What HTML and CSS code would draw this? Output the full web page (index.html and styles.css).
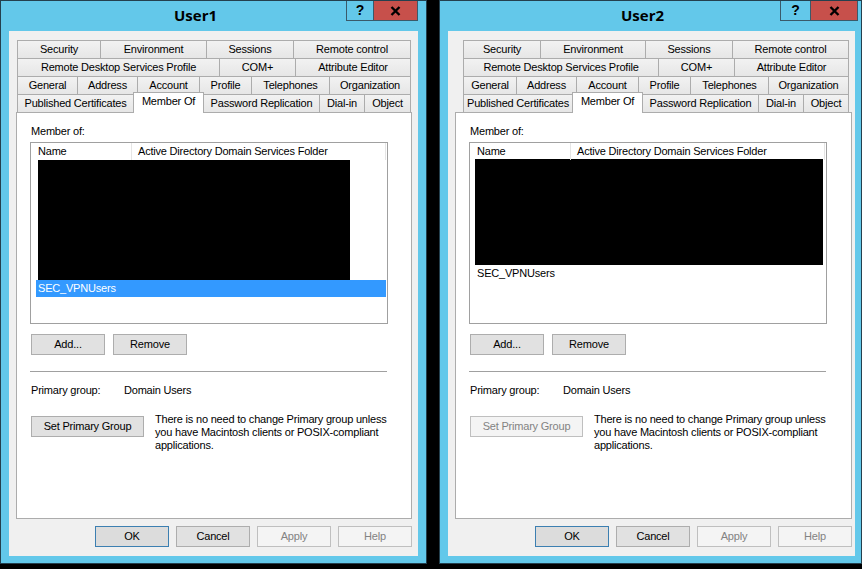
FILE: index.html
```html
<!DOCTYPE html>
<html>
<head>
    <title>User Properties</title>
    <link rel="stylesheet" href="styles.css">
</head>
<body>
<div class="desk">

    <div class="win">
        <div class="titlebar">
            <div class="title">User1</div>
            <div class="caps">
                <div class="cap cap-help">?</div>
                <div class="cap cap-close">
                    <svg width="11" height="10" viewBox="0 0 11 10"><path d="M1.5 1l8 8M9.5 1l-8 8" stroke="#000" stroke-width="2.4" fill="none"/></svg>
                </div>
            </div>
        </div>
        <div class="client">
            <div class="tabs">
                <div class="tab-row r1">
                    <div class="tab">Security</div>
                    <div class="tab">Environment</div>
                    <div class="tab">Sessions</div>
                    <div class="tab">Remote control</div>
                </div>
                <div class="tab-row r2">
                    <div class="tab">Remote Desktop Services Profile</div>
                    <div class="tab">COM+</div>
                    <div class="tab">Attribute Editor</div>
                </div>
                <div class="tab-row r3">
                    <div class="tab">General</div>
                    <div class="tab">Address</div>
                    <div class="tab">Account</div>
                    <div class="tab">Profile</div>
                    <div class="tab">Telephones</div>
                    <div class="tab">Organization</div>
                </div>
                <div class="tab-row r4">
                    <div class="tab">Published Certificates</div>
                    <div class="tab active">Member Of</div>
                    <div class="tab">Password Replication</div>
                    <div class="tab">Dial-in</div>
                    <div class="tab">Object</div>
                </div>
            </div>
            <div class="panel">
                <div class="lbl">Member of:</div>
                <div class="list">
                    <div class="list-head">
                        <div class="col col-name">Name</div>
                        <div class="col col-folder">Active Directory Domain Services Folder</div>
                    </div>
                    <div class="redact"></div>
                    <div class="item sel">SEC_VPNUsers</div>
                </div>
                <div class="btn-row">
                    <button class="btn">Add...</button>
                    <button class="btn">Remove</button>
                </div>
                <div class="sep"></div>
                <div class="pg-row"><span class="pg-label">Primary group:</span><span>Domain Users</span></div>
                <div class="set-row">
                    <button class="btn btn-wide">Set Primary Group</button>
                    <p class="note">There is no need to change Primary group unless<br>you have Macintosh clients or POSIX-compliant<br>applications.</p>
                </div>
            </div>
            <div class="footer">
                <button class="btn btn-default">OK</button>
                <button class="btn">Cancel</button>
                <button class="btn" disabled>Apply</button>
                <button class="btn" disabled>Help</button>
            </div>
        </div>
    </div>

    <div class="win win-2">
        <div class="titlebar">
            <div class="title">User2</div>
            <div class="caps">
                <div class="cap cap-help">?</div>
                <div class="cap cap-close">
                    <svg width="11" height="10" viewBox="0 0 11 10"><path d="M1.5 1l8 8M9.5 1l-8 8" stroke="#000" stroke-width="2.4" fill="none"/></svg>
                </div>
            </div>
        </div>
        <div class="client">
            <div class="tabs">
                <div class="tab-row r1">
                    <div class="tab">Security</div>
                    <div class="tab">Environment</div>
                    <div class="tab">Sessions</div>
                    <div class="tab">Remote control</div>
                </div>
                <div class="tab-row r2">
                    <div class="tab">Remote Desktop Services Profile</div>
                    <div class="tab">COM+</div>
                    <div class="tab">Attribute Editor</div>
                </div>
                <div class="tab-row r3">
                    <div class="tab">General</div>
                    <div class="tab">Address</div>
                    <div class="tab">Account</div>
                    <div class="tab">Profile</div>
                    <div class="tab">Telephones</div>
                    <div class="tab">Organization</div>
                </div>
                <div class="tab-row r4">
                    <div class="tab">Published Certificates</div>
                    <div class="tab active">Member Of</div>
                    <div class="tab">Password Replication</div>
                    <div class="tab">Dial-in</div>
                    <div class="tab">Object</div>
                </div>
            </div>
            <div class="panel">
                <div class="lbl">Member of:</div>
                <div class="list">
                    <div class="list-head">
                        <div class="col col-name">Name</div>
                        <div class="col col-folder">Active Directory Domain Services Folder</div>
                    </div>
                    <div class="redact"></div>
                    <div class="item">SEC_VPNUsers</div>
                </div>
                <div class="btn-row">
                    <button class="btn">Add...</button>
                    <button class="btn">Remove</button>
                </div>
                <div class="sep"></div>
                <div class="pg-row"><span class="pg-label">Primary group:</span><span>Domain Users</span></div>
                <div class="set-row">
                    <button class="btn btn-wide" disabled>Set Primary Group</button>
                    <p class="note">There is no need to change Primary group unless<br>you have Macintosh clients or POSIX-compliant<br>applications.</p>
                </div>
            </div>
            <div class="footer">
                <button class="btn btn-default">OK</button>
                <button class="btn">Cancel</button>
                <button class="btn" disabled>Apply</button>
                <button class="btn" disabled>Help</button>
            </div>
        </div>
    </div>

</div>
</body>
</html>
```

FILE: styles.css
```css
body { margin: 0; background: #000; font-family: "Liberation Sans", Arial, sans-serif; font-size: 11px; line-height: 13px; letter-spacing: -0.2px; color: #000; overflow: hidden; }
.desk { display: flex; gap: 12px; align-items: flex-start; }

/* window frame */
.win { width: 427px; height: 564px; box-sizing: border-box; border: 1px solid #24404e; background: #63c8ea; display: flex; flex-direction: column; }
.titlebar { height: 30px; display: flex; flex-shrink: 0; }
.title { flex: 1; padding-left: 44px; text-align: center; font-family: "Open Sans", sans-serif; font-weight: 700; font-size: 15px; line-height: 28px; letter-spacing: 0; }
.caps { display: flex; align-self: flex-start; margin-right: 8px; }
.cap { height: 20px; box-sizing: border-box; border: 1px solid #3a5a6a; border-top: 0; display: flex; align-items: center; justify-content: center; }
.cap-help { width: 28px; font-family: "Liberation Sans", sans-serif; font-weight: 700; font-size: 14px; }
.cap-close { width: 45px; margin-left: -1px; background: #c7504b; }

.client { flex: 1; margin: 0 8px 7px; background: #f0f0f0; padding: 9px 6px 9px 7px; display: flex; flex-direction: column; }

/* tabs */
.tabs { margin: 0 1px; }
.tab-row { display: grid; height: 18px; }
.r1 { grid-template-columns: 83px 106px 87px 1fr; }
.r2 { grid-template-columns: 202px 76px 1fr; }
.r3 { grid-template-columns: 60px 60px 62px 52px 78px 1fr; }
.r4 { grid-template-columns: 116px 70px 116px 45px 1fr; }
.tab { border: 1px solid #acacac; border-bottom: 0; margin-right: -1px; background: linear-gradient(#f2f2f2, #e6e6e6); text-align: center; line-height: 17px; white-space: nowrap; }
.tab:last-child { margin-right: 0; }
.tab.active { background: #fff; margin-top: -2px; margin-bottom: -1px; position: relative; z-index: 1; line-height: 16px; }

/* page */
.panel { height: 407px; box-sizing: border-box; border: 1px solid #acacac; background: #fff; padding: 12px 14px 0; }
.lbl { margin-bottom: 4px; }
.list { margin-left: -1px; width: 358px; height: 182px; box-sizing: border-box; border: 1px solid #a0a0a0; padding: 0 1px; }
.list-head { display: flex; height: 17px; }
.col { padding-left: 6px; line-height: 16px; border-right: 1px solid #e5e5e5; white-space: nowrap; }
.col-name { width: 93px; }
.col-folder { flex: 1; }
.redact { margin-left: 6px; width: 312px; height: 120px; background: #000; }
.item { margin-left: 4px; padding-left: 2px; height: 17px; line-height: 17px; }
.item.sel { background: #3399ff; color: #fff; }

.btn { width: 74px; height: 21px; padding: 0; border: 1px solid #adadad; background: #e1e1e1; font: inherit; letter-spacing: inherit; color: #000; }
.btn:disabled { background: #f4f4f4; border-color: #bfbfbf; color: #838383; }
.btn-default { border-color: #3c7fb1; background: #dcdcdc; }
.btn-wide { width: 113px; flex-shrink: 0; margin-top: 3px; }
.btn-row { display: flex; gap: 8px; margin-top: 10px; }

.sep { margin: 16px 0 0 -1px; width: 357px; height: 1px; background: #a0a0a0; }
.pg-row { margin-top: 12px; display: flex; }
.pg-label { width: 93px; }
.set-row { margin-top: 16px; display: flex; }
.note { margin: 0 0 0 11px; }

.footer { display: flex; justify-content: flex-end; gap: 7px; margin-top: 7px; }

/* second window is a touch narrower with its tab strip inset */
.win-2 { width: 423px; }
.win-2 .title { padding-left: 65px; }
.win-2 .caps { margin-right: 3px; }
.win-2 .cap-help { width: 31px; }
.win-2 .cap-close { width: 48px; }
.win-2 .client { margin-right: 6px; padding-right: 3px; }
.win-2 .tabs { margin: 0 3px 0 8px; }
.win-2 .r1 { grid-template-columns: 77px 105px 87px 1fr; }
.win-2 .r2 { grid-template-columns: 195px 76px 1fr; }
.win-2 .r3 { grid-template-columns: 53px 60px 62px 52px 78px 1fr; }
.win-2 .r4 { grid-template-columns: 109px 70px 116px 45px 1fr; }
.win-2 .redact { margin-top: -1px; margin-left: 4px; width: 348px; height: 106px; }
```
